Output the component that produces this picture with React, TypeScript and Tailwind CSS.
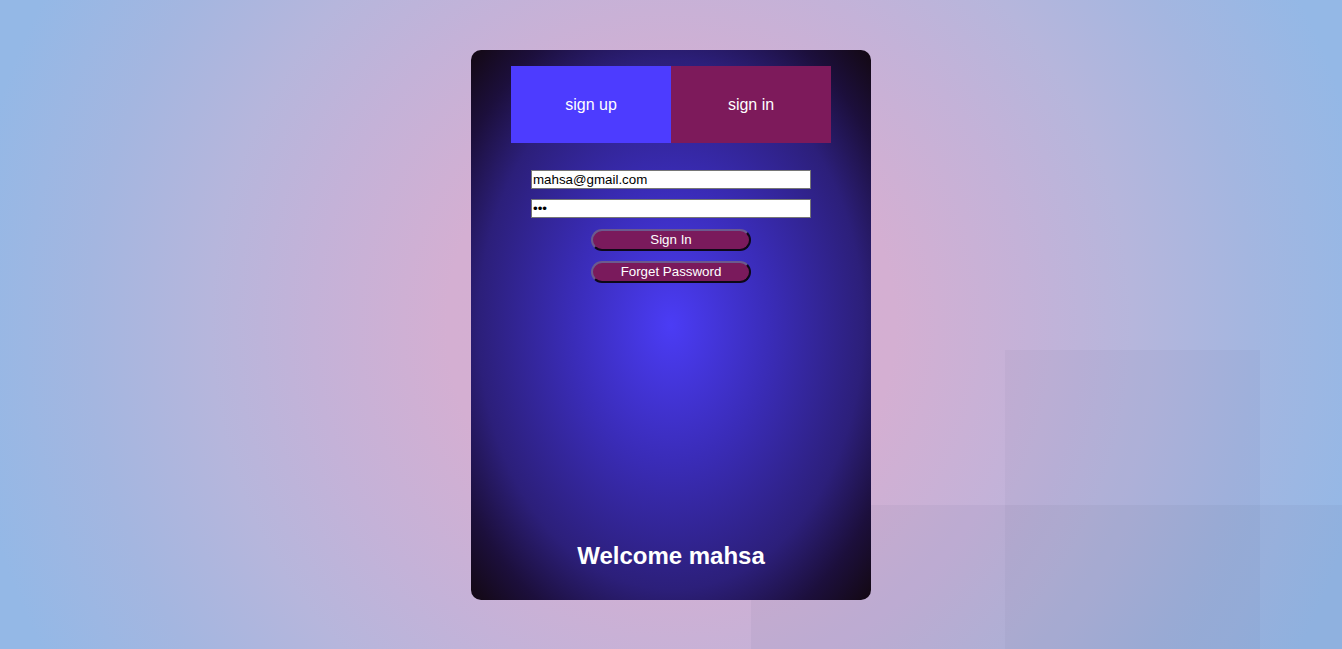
import React, { useState } from "react"

const AuthCard = () => {
    const [tab, setTab] = useState<"up" | "in">("in")
    const [email, setEmail] = useState("mahsa@gmail.com")
    const [password, setPassword] = useState("123")

    return (
        <div className="w-[400px] h-[550px] rounded-[10px] flex flex-col items-center pt-4 pb-[30px] bg-[radial-gradient(ellipse_at_center,#4b3cf5_0%,#3a2cb8_35%,#2c1f7a_68%,#1c0f3c_85%,#130812_100%)]">
            <div className="flex w-[320px] h-[77px]">
                <button
                    onClick={() => setTab("up")}
                    className="flex-1 bg-[#4d3cff] text-white text-[16px] pt-[2px] flex items-center justify-center"
                >
                    sign up
                </button>
                <button
                    onClick={() => setTab("in")}
                    className="flex-1 bg-[#7d1a5b] text-white text-[16px] pt-[2px] flex items-center justify-center"
                >
                    sign in
                </button>
            </div>

            <form className="flex flex-col items-center mt-[27px]" onSubmit={(e) => e.preventDefault()}>
                <input
                    type="email"
                    value={email}
                    onChange={(e) => setEmail(e.target.value)}
                    className="w-[280px] h-[19px] bg-white text-black text-[13.33px] px-[1px] pt-[1px] border border-[#767676] outline-none"
                />
                <input
                    type="password"
                    value={password}
                    onChange={(e) => setPassword(e.target.value)}
                    className="w-[280px] h-[19px] mt-[10px] bg-white text-black text-[13.33px] px-[1px] pt-[1px] border border-[#767676] outline-none"
                />
                <button className="w-[160px] h-[22px] mt-[11px] rounded-full bg-[#7a1a5c] text-white text-[13.33px] leading-none border-2 border-t-[#6b5a8e] border-l-[#6b5a8e] border-b-[#0d0818] border-r-[#0d0818]">
                    Sign In
                </button>
                <button className="w-[160px] h-[22px] mt-[10px] rounded-full bg-[#7a1a5c] text-white text-[13.33px] leading-none pt-[1px] border-2 border-t-[#6b5a8e] border-l-[#6b5a8e] border-b-[#0d0818] border-r-[#0d0818]">
                    Forget Password
                </button>
            </form>

            <h2 className="mt-auto text-white text-[24px] font-bold leading-[28px]">
                Welcome mahsa
            </h2>
            {tab === "up" && <span className="hidden">sign up</span>}
        </div>
    )
}

export default function App() {
    return (
        <div className="relative w-full h-[649px] overflow-hidden flex items-center justify-center [font-family:'Liberation_Sans',Arial,sans-serif] bg-[radial-gradient(circle_at_center,#d6aed2_0%,#d4afd2_30%,#c4b2d8_48%,#b6b6dc_62%,#a4b6e0_78%,#94b8e6_95%)]">
            <div className="pointer-events-none absolute left-[751px] top-[505px] w-[591px] h-[144px] bg-[#3a3a6a]/[0.05]" />
            <div className="pointer-events-none absolute left-[1005px] top-[350px] w-[255px] h-[299px] bg-[#3a3a6a]/[0.04]" />
            <div className="relative">
                <AuthCard />
            </div>
        </div>
    )
}
